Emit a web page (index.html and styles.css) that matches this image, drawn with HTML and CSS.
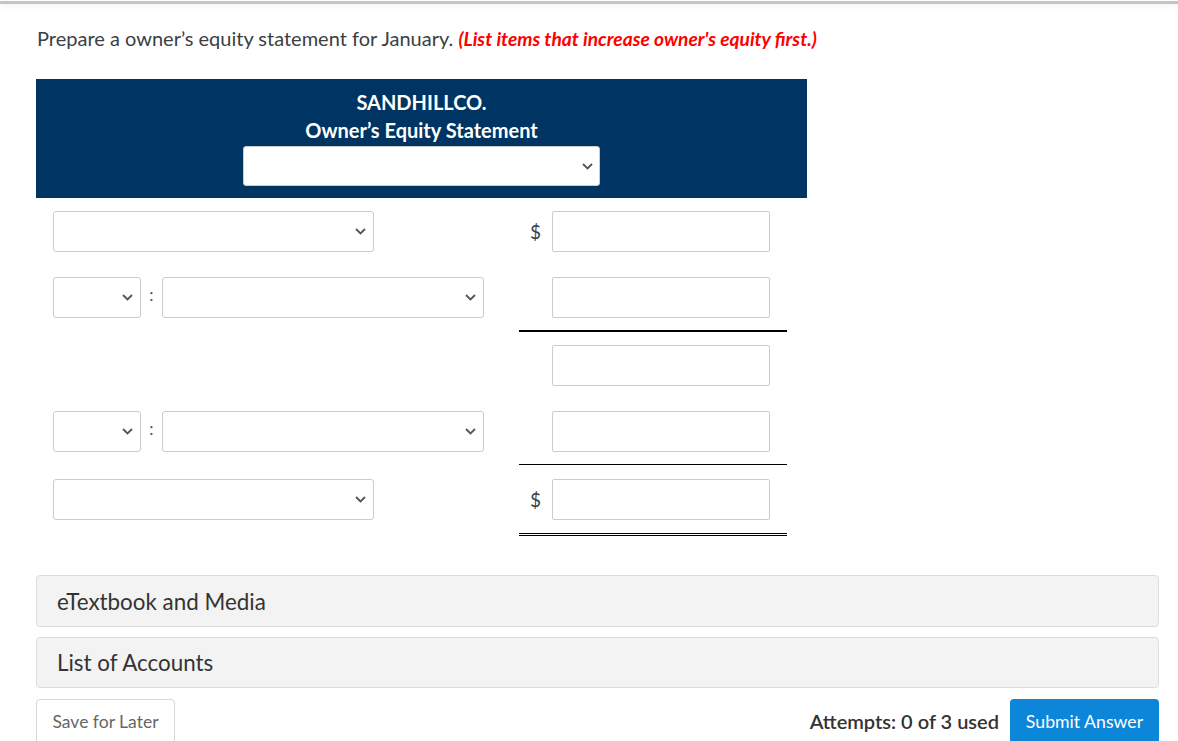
FILE: index.html
```html
<!DOCTYPE html>
<html>
<head>
<meta charset="utf-8">
<link rel="stylesheet" href="styles.css">
</head>
<body>
<div class="topbar"></div>
<main class="page">
  <p class="instruction">Prepare a owner’s equity statement for January. <em class="hint">(List items that increase owner's equity first.)</em></p>

  <section class="statement">
    <header class="st-head">
      <div class="st-title">SANDHILLCO.</div>
      <div class="st-title">Owner’s Equity Statement</div>
      <div class="select sel-head"><svg class="chev" viewBox="0 0 11 7" width="11" height="7"><path d="M1 1l4.5 4.5L10 1" fill="none" stroke="#555" stroke-width="1.8"/></svg></div>
    </header>

    <div class="row">
      <div class="left"><div class="select sel-wide"><svg class="chev" viewBox="0 0 11 7" width="11" height="7"><path d="M1 1l4.5 4.5L10 1" fill="none" stroke="#555" stroke-width="1.8"/></svg></div></div>
      <div class="right"><span class="cur">$</span><div class="input"></div></div>
    </div>

    <div class="row">
      <div class="left">
        <div class="select sel-small"><svg class="chev" viewBox="0 0 11 7" width="11" height="7"><path d="M1 1l4.5 4.5L10 1" fill="none" stroke="#555" stroke-width="1.8"/></svg></div>
        <span class="colon">:</span>
        <div class="select sel-acct"><svg class="chev" viewBox="0 0 11 7" width="11" height="7"><path d="M1 1l4.5 4.5L10 1" fill="none" stroke="#555" stroke-width="1.8"/></svg></div>
      </div>
      <div class="right line-thick"><span class="cur"></span><div class="input"></div></div>
    </div>

    <div class="row">
      <div class="left"></div>
      <div class="right"><span class="cur"></span><div class="input"></div></div>
    </div>

    <div class="row">
      <div class="left">
        <div class="select sel-small"><svg class="chev" viewBox="0 0 11 7" width="11" height="7"><path d="M1 1l4.5 4.5L10 1" fill="none" stroke="#555" stroke-width="1.8"/></svg></div>
        <span class="colon">:</span>
        <div class="select sel-acct"><svg class="chev" viewBox="0 0 11 7" width="11" height="7"><path d="M1 1l4.5 4.5L10 1" fill="none" stroke="#555" stroke-width="1.8"/></svg></div>
      </div>
      <div class="right line-thin"><span class="cur"></span><div class="input"></div></div>
    </div>

    <div class="row row-last">
      <div class="left"><div class="select sel-wide"><svg class="chev" viewBox="0 0 11 7" width="11" height="7"><path d="M1 1l4.5 4.5L10 1" fill="none" stroke="#555" stroke-width="1.8"/></svg></div></div>
      <div class="right line-double"><span class="cur">$</span><div class="input"></div></div>
    </div>
  </section>

  <div class="panel">eTextbook and Media</div>
  <div class="panel panel-2">List of Accounts</div>

  <div class="actions">
    <button class="btn-save">Save for Later</button>
    <div class="actions-right">
      <span class="attempts">Attempts: 0 of 3 used</span>
      <button class="btn-submit">Submit Answer</button>
    </div>
  </div>
</main>
</body>
</html>
```

FILE: styles.css
```css
html, body {
  margin: 0;
  padding: 0;
  background: #fff;
  font-family: Lato, "Open Sans", "Liberation Sans", sans-serif;
  color: #333;
  overflow: hidden;
}

.topbar {
  height: 3px;
  margin-top: 1px;
  background: #c4c4c4;
  box-shadow: 0 2px 6px rgba(0, 0, 0, 0.08);
}

.page {
  padding: 0 19px 0 36px;
}

.instruction {
  margin: 21px 0 0 1px;
  font-size: 20px;
  line-height: 26px;
  color: #3b4044;
}

.hint {
  color: #f00;
  font-weight: 700;
  font-style: italic;
  font-size: 19.2px;
}

.statement {
  width: 771px;
  margin-top: 27px;
}

.st-head {
  background: #003462;
  padding: 9px 0 12px;
  display: flex;
  flex-direction: column;
  align-items: center;
}

.st-title {
  color: #fff;
  font-weight: 700;
  font-size: 20px;
  line-height: 28px;
}

.select {
  box-sizing: border-box;
  height: 41px;
  border: 1px solid #ccc;
  border-radius: 3px;
  background: #fff;
  display: flex;
  align-items: center;
  justify-content: flex-end;
  padding-right: 7px;
}

.sel-head {
  width: 357px;
  height: 40px;
  margin-top: 2px;
  padding-right: 6px;
}

.sel-wide { width: 321px; }
.sel-small { width: 88px; }
.sel-acct { width: 322px; }

.chev { display: block; }

.row {
  display: flex;
}

.left {
  box-sizing: border-box;
  width: 483px;
  padding: 13px 0 12px 17px;
  display: flex;
  align-items: flex-start;
}

.colon {
  width: 21px;
  text-align: center;
  font-size: 17px;
  line-height: 36px;
  color: #555;
}

.right {
  box-sizing: border-box;
  width: 268px;
  padding: 13px 0 12px;
  display: flex;
  align-items: center;
}

.row-last .left,
.row-last .right {
  padding-top: 14px;
  padding-bottom: 13px;
}

.cur {
  width: 33px;
  text-align: center;
  font-size: 19px;
  color: #3b4044;
}

.input {
  box-sizing: border-box;
  width: 218px;
  height: 41px;
  border: 1px solid #ccc;
  border-radius: 2px;
  background: #fff;
}

.line-thick { border-bottom: 2px solid #000; }
.line-thin { border-bottom: 1px solid #000; }
.line-double { border-bottom: 3px double #000; }

.panel {
  box-sizing: border-box;
  height: 52px;
  margin-top: 39px;
  border: 1px solid #dcdcdc;
  border-radius: 4px;
  background: #f3f3f3;
  padding-left: 20px;
  display: flex;
  align-items: center;
  font-size: 22.4px;
  color: #333;
}

.panel-2 {
  height: 51px;
  margin-top: 10px;
}

.actions {
  margin-top: 11px;
  display: flex;
  justify-content: space-between;
  align-items: flex-start;
}

.actions-right {
  display: flex;
  align-items: flex-start;
  gap: 11px;
}

.btn-save {
  box-sizing: border-box;
  width: 139px;
  height: 46px;
  border: 1px solid #d6d6d6;
  border-radius: 4px;
  background: #fff;
  font-family: inherit;
  font-size: 17.5px;
  color: #666;
  padding: 0 0 2px;
}

.attempts {
  font-size: 20px;
  font-weight: 600;
  color: #333;
  line-height: 44px;
}

.btn-submit {
  box-sizing: border-box;
  width: 149px;
  height: 46px;
  border: none;
  border-radius: 4px;
  background: #0b86d9;
  color: #fff;
  font-family: inherit;
  font-size: 17.7px;
  padding: 0 0 2px;
}
```
